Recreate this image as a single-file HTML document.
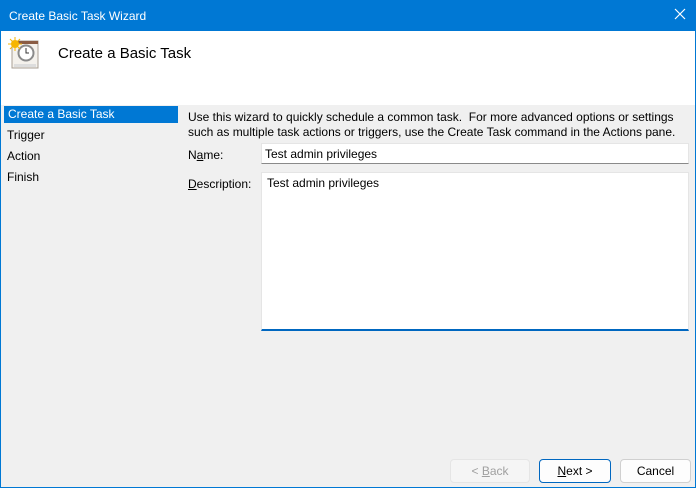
<!DOCTYPE html>
<html><head><style>
*{margin:0;padding:0;box-sizing:border-box}
body{width:696px;height:488px;overflow:hidden;font-family:"Liberation Sans",Arial,sans-serif;font-size:12px;color:#000;background:#f0f0f0;position:relative}
.win{position:absolute;left:0;top:0;width:696px;height:488px;border:1px solid #0078d4;background:#f0f0f0}
.title{position:absolute;left:0;top:0;width:696px;height:31px;background:#0078d4;color:#fff;font-size:12px}
.title span{position:absolute;left:9px;top:9px}
.close{position:absolute;left:673px;top:7px}
.head{position:absolute;left:1px;top:31px;width:694px;height:74px;background:#fff}
.h1{position:absolute;left:58px;top:45px;font-size:15px}
.sel{position:absolute;left:4px;top:106px;width:174px;height:17px;background:#0078d4;color:#fff}
.t{position:absolute;white-space:nowrap}
.inp{position:absolute;background:#fff;border:1px solid #e5e5e5;border-bottom:1px solid #8a8a8a}
.btn{position:absolute;top:459px;height:24px;border:1px solid #d0d0d0;border-radius:4px;background:#fdfdfd;text-align:center;line-height:22px;font-size:12px}
u{text-decoration:underline}
</style></head><body>
<div class="win"></div>
<div class="title"><span>Create Basic Task Wizard</span>
<svg class="close" width="14" height="14" viewBox="0 0 14 14"><path d="M2 2L12 12M12 2L2 12" stroke="#fff" stroke-width="1.2"/></svg></div>
<div class="head"></div>
<svg style="position:absolute;left:6px;top:36px" width="34" height="34" viewBox="0 0 34 34">
<rect x="6" y="5" width="26" height="27" fill="#f4f1ec" stroke="#a89f94"/>
<rect x="6" y="5" width="26" height="3" fill="#8a5c44"/>
<rect x="8" y="28" width="22" height="3" fill="#ddd"/>
<circle cx="20" cy="17" r="7.5" fill="#fff" stroke="#8a8a8a" stroke-width="2"/>
<path d="M20 12V17H23" stroke="#333" stroke-width="1" fill="none"/>
<circle cx="9" cy="8" r="4" fill="#f7b500"/>
<path d="M9 1V15M2 8H16M4 3L14 13M14 3L4 13" stroke="#f7b500" stroke-width="1"/>
</svg>
<div class="h1 t">Create a Basic Task</div>
<div class="sel"></div>
<div class="t" style="left:8px;top:107px;color:#fff">Create a Basic Task</div>
<div class="t" style="left:7px;top:128px">Trigger</div>
<div class="t" style="left:7px;top:149px">Action</div>
<div class="t" style="left:7px;top:170px">Finish</div>
<div class="t" style="left:188px;top:110px;line-height:15px">Use this wizard to quickly schedule a common task.&nbsp; For more advanced options or settings<br>such as multiple task actions or triggers, use the Create Task command in the Actions pane.</div>
<div class="t" style="left:188px;top:148px">N<u>a</u>me:</div>
<div class="t" style="left:188px;top:177px"><u>D</u>escription:</div>
<div class="inp" style="left:261px;top:143px;width:428px;height:21px"></div>
<div class="t" style="left:265px;top:147px">Test admin privileges</div>
<div class="inp" style="left:261px;top:172px;width:428px;height:159px;border-bottom:2px solid #0067c0"></div>
<div class="t" style="left:267px;top:176px">Test admin privileges</div>
<div class="btn" style="left:450px;width:80px;color:#a0a0a0;background:#f5f5f5;border-color:#e5e5e5">&lt; <u>B</u>ack</div>
<div class="btn" style="left:539px;width:72px;border:1px solid #0067c0"><u>N</u>ext &gt;</div>
<div class="btn" style="left:620px;width:71px">Cancel</div>
</body></html>
